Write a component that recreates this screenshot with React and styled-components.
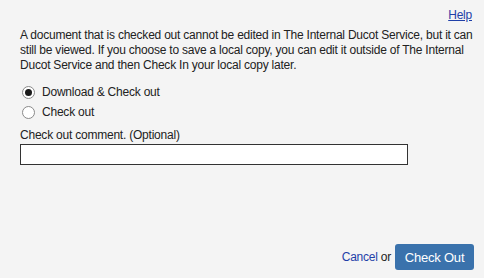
import React, { useState } from 'react';
import styled, { createGlobalStyle } from 'styled-components';

const GlobalStyle = createGlobalStyle`
  html, body {
    margin: 0;
    padding: 0;
    background: #f4f4f4;
  }
  body {
    font-family: "Liberation Sans", Arial, sans-serif;
    font-size: 12px;
    letter-spacing: -0.22px;
    color: #222;
  }
`;

const Dialog = styled.div`
  width: 484px;
  height: 278px;
  box-sizing: border-box;
  padding: 8px 10px 8px 20px;
  display: flex;
  flex-direction: column;
`;

const HelpRow = styled.div`
  display: flex;
  justify-content: flex-end;
  padding-right: 2px;
  line-height: 15px;
`;

const Link = styled.a`
  color: #1f3fa8;
  text-decoration: ${p => (p.$underline ? 'underline' : 'none')};
  cursor: pointer;
`;

const Intro = styled.p`
  margin: 5px 0 0;
  line-height: 15px;
  color: #222;
`;

const IntroLine = styled.span`
  display: block;
  white-space: nowrap;
`;

const Options = styled.div`
  display: flex;
  flex-direction: column;
  gap: 5px;
  margin-top: 12px;
  padding-left: 2px;
`;

const Option = styled.label`
  display: flex;
  align-items: center;
  gap: 7px;
  line-height: 15px;
  cursor: pointer;
`;

const Radio = styled.input`
  appearance: none;
  margin: 0;
  width: 13px;
  height: 13px;
  border: 1px solid #8a8a8a;
  border-radius: 50%;
  background: #fff;
  box-sizing: border-box;
  display: grid;
  place-items: center;

  &:checked::after {
    content: '';
    width: 7px;
    height: 7px;
    border-radius: 50%;
    background: #1a1a1a;
  }
`;

const CommentLabel = styled.label`
  display: block;
  margin-top: 8px;
  line-height: 15px;
`;

const CommentInput = styled.input`
  display: block;
  box-sizing: border-box;
  width: 388px;
  height: 21px;
  margin-top: 1px;
  border: 1px solid #333;
  background: #fff;
  font: inherit;
  padding: 2px 4px;
  outline: none;
`;

const Footer = styled.div`
  margin-top: auto;
  display: flex;
  justify-content: flex-end;
  align-items: center;
  gap: 3px;
`;

const PrimaryButton = styled.button`
  font-family: "Liberation Sans", Arial, sans-serif;
  font-size: 13px;
  letter-spacing: -0.2px;
  color: #fff;
  background: #3a72ac;
  border: none;
  border-radius: 3px;
  height: 26px;
  width: 79px;
  padding: 0;
  margin-left: 1px;
  cursor: pointer;
`;

export default function App() {
  const [mode, setMode] = useState('download');
  const [comment, setComment] = useState('');

  return (
    <>
      <GlobalStyle />
      <Dialog>
        <HelpRow>
          <Link $underline>Help</Link>
        </HelpRow>
        <Intro>
          <IntroLine>A document that is checked out cannot be edited in The Internal Ducot Service, but it can</IntroLine>
          <IntroLine>still be viewed. If you choose to save a local copy, you can edit it outside of The Internal</IntroLine>
          <IntroLine>Ducot Service and then Check In your local copy later.</IntroLine>
        </Intro>
        <Options>
          <Option>
            <Radio
              type="radio"
              name="mode"
              checked={mode === 'download'}
              onChange={() => setMode('download')}
            />
            Download &amp; Check out
          </Option>
          <Option>
            <Radio
              type="radio"
              name="mode"
              checked={mode === 'checkout'}
              onChange={() => setMode('checkout')}
            />
            Check out
          </Option>
        </Options>
        <CommentLabel htmlFor="comment">Check out comment. (Optional)</CommentLabel>
        <CommentInput id="comment" value={comment} onChange={e => setComment(e.target.value)} />
        <Footer>
          <Link>Cancel</Link>
          <span>or</span>
          <PrimaryButton>Check Out</PrimaryButton>
        </Footer>
      </Dialog>
    </>
  );
}
